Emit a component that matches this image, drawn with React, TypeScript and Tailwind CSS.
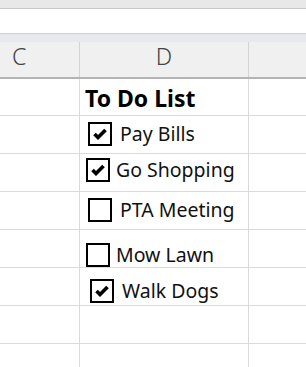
import React from "react";

type Item = { label: string; done: boolean; box: string; gap: string };

const items: Item[] = [
  { label: "Pay Bills", done: true, box: "ml-[8px] mt-[6px]", gap: "ml-[8px]" },
  { label: "Go Shopping", done: true, box: "ml-[6px] mt-[4px]", gap: "ml-[6px]" },
  { label: "PTA Meeting", done: false, box: "ml-[8px] mt-[6px]", gap: "ml-[8px]" },
  { label: "Mow Lawn", done: false, box: "ml-[6px] mt-[13px]", gap: "ml-[6px]" },
  { label: "Walk Dogs", done: true, box: "ml-[10px] mt-[11px]", gap: "ml-[8px]" },
];

function Check({ done }: { done: boolean }) {
  return (
    <div className="w-[24px] h-[24px] border-2 border-black bg-white flex items-center justify-center shrink-0">
      {done && (
        <svg width="14" height="12" viewBox="0 0 14 12">
          <path d="M1.5 6 L5 9.5 L12.5 2" fill="none" stroke="black" strokeWidth="3.6" strokeLinejoin="miter" />
        </svg>
      )}
    </div>
  );
}

function Row({ children, tall }: { children?: React.ReactNode; tall?: boolean }) {
  return (
    <div className={`flex ${tall ? "h-[37px]" : "h-[38px]"} border-b border-[#dadada]`}>
      <div className="w-[80px] border-r border-[#dadada] shrink-0" />
      <div className="w-[169px] border-r border-[#dadada] shrink-0">{children}</div>
      <div className="flex-1" />
    </div>
  );
}

export default function App() {
  return (
    <div className="w-[306px] h-[367px] overflow-hidden bg-white" style={{ fontFamily: '"Noto Sans", "Open Sans", sans-serif' }}>
      <div className="h-[9px] bg-[#e8e8e8] border-b border-[#c9c9c9]" />
      <div className="h-[25px] bg-white border-b border-[#d0d0d0]" />
      <div className="h-[45px] bg-[#f0f0f0] border-b-2 border-[#b4b4b4] flex flex-col">
        <div className="h-[8px] bg-[#e7e9ee]" />
        <div className="flex flex-1 text-[#444] text-[23px] font-light leading-none">
          <div className="w-[80px] border-r border-[#d4d4d4] pl-[12px] pt-[3px]">C</div>
          <div className="w-[169px] border-r border-[#d4d4d4] text-center pt-[3px]">D</div>
          <div className="flex-1" />
        </div>
      </div>
      <Row tall>
        <div className="pl-[5px] pt-[5px] text-[23px] font-bold text-black leading-tight">To Do List</div>
      </Row>
      {items.map((it) => (
        <Row key={it.label}>
          <div className={`flex items-center ${it.box}`}>
            <Check done={it.done} />
            <span className={`${it.gap} text-[19.5px] text-[#111] leading-none`}>{it.label}</span>
          </div>
        </Row>
      ))}
      <Row />
      <Row />
    </div>
  );
}
